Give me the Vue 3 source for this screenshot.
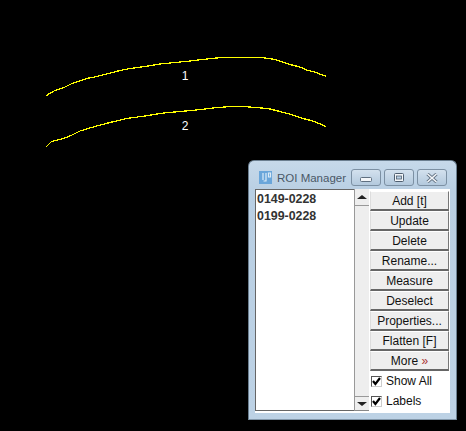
<script setup>
const curves = [
  '46,96 48,94.5 55,90.5 65,87 71,84 86.5,78.5 97,76.5 106.5,74 118,71 130,68.5 145,66.5 160,64 175,62.5 190,61 207,59 221.5,57.5 261.5,57.5 275,59.5 279,61 290,64.5 300,67 306.5,70 316,72.5 326.5,76.5',
  '46,147 51.5,141.5 63.5,138.5 72,135 80,131 96.5,126 110,122.5 126.5,118.5 145,116 163.5,113 180,111.5 196.5,110 213,108 230,106.5 243.5,106.5 268,108.5 280,111.5 293,115 303,118.5 313,121 326,126.5'
]
const labels = [
  { text: '1', x: 185, y: 80 },
  { text: '2', x: 185, y: 130 }
]
const rois = ['0149-0228', '0199-0228']
const buttons = ['Add [t]', 'Update', 'Delete', 'Rename...', 'Measure', 'Deselect', 'Properties...', 'Flatten [F]']
const checks = ['Show All', 'Labels']
</script>

<template>
  <div class="desktop">
    <svg class="canvas" width="466" height="431" viewBox="0 0 466 431">
      <polyline v-for="(c, i) in curves" :key="i" :points="c" class="curve" />
      <text v-for="l in labels" :key="l.text" :x="l.x" :y="l.y" class="label">{{ l.text }}</text>
    </svg>

    <div class="window">
      <div class="titlebar">
        <svg class="appicon" width="13" height="13" viewBox="0 0 13 13">
          <rect x="0" y="0" width="13" height="13" fill="#6aa6da" />
          <path d="M4 2v7M7 2v8H4.5M9.5 2h2v4h-2z" fill="none" stroke="#dcecf8" stroke-width="1.2" />
        </svg>
        <span class="title">ROI Manager</span>
        <div class="controls">
          <div class="ctl">
            <svg width="14" height="8" viewBox="0 0 14 8"><rect x="1.5" y="3.5" width="11" height="4" rx="1" fill="#f3f6f9" stroke="#5f6f80" /></svg>
          </div>
          <div class="ctl">
            <svg width="14" height="10" viewBox="0 0 14 10"><rect x="2.5" y="0.5" width="9" height="8" rx="1" fill="#f3f6f9" stroke="#4f5f70" /><rect x="4.5" y="3" width="5" height="3" fill="#b9cfe3" stroke="#4f5f70" stroke-width="0.8" /></svg>
          </div>
          <div class="ctl ctl-close">
            <svg width="14" height="10" viewBox="0 0 14 10"><path d="M2.5 1 L11.5 9 M11.5 1 L2.5 9" stroke="#5f6f80" stroke-width="3.2" /><path d="M2.5 1 L11.5 9 M11.5 1 L2.5 9" stroke="#f3f6f9" stroke-width="1.6" /></svg>
          </div>
        </div>
      </div>

      <div class="panel">
        <div class="list">
          <div v-for="r in rois" :key="r" class="roi">{{ r }}</div>
        </div>
        <div class="scrollbar">
          <div class="arrow top"><span class="tri up"></span></div>
          <div class="track"></div>
          <div class="arrow bottom"><span class="tri down"></span></div>
        </div>
        <div class="side">
          <div v-for="b in buttons" :key="b" class="btn">{{ b }}</div>
          <div class="btn">More <span class="more">»</span></div>
          <label v-for="c in checks" :key="c" class="check">
            <span class="box">
              <svg width="9" height="9" viewBox="0 0 9 9"><path d="M1 4 L3.4 7 L8 1" fill="none" stroke="#000" stroke-width="2.2" /></svg>
            </span>
            {{ c }}
          </label>
        </div>
      </div>
    </div>
  </div>
</template>

<style scoped>
.desktop {
  position: relative;
  width: 466px;
  height: 431px;
  background: #000;
  overflow: hidden;
  font-family: "Liberation Sans", Arial, sans-serif;
}
.canvas {
  position: absolute;
  left: 0;
  top: 0;
}
.curve {
  fill: none;
  stroke: #ffff00;
  stroke-width: 1.25;
  shape-rendering: crispEdges;
}
.label {
  fill: #fff;
  font-size: 12px;
  text-anchor: middle;
  font-family: "Liberation Sans", Arial, sans-serif;
}
.window {
  position: absolute;
  left: 248px;
  top: 160px;
  width: 209px;
  height: 260px;
  box-sizing: border-box;
  padding: 0 6px 6px 6px;
  display: flex;
  flex-direction: column;
  background: linear-gradient(180deg, #c6d9ea 0, #b9cfe3 30px, #bdd2e5 100%);
  border-radius: 6px 6px 0 0;
  border: 1px solid #6b7f90;
  border-bottom-color: #8296a8;
}
.titlebar {
  height: 28px;
  display: flex;
  align-items: center;
  flex: none;
  padding-top: 5px;
  box-sizing: border-box;
}
.appicon {
  margin: 0 5px 0 4px;
  flex: none;
}
.title {
  font-size: 11.5px;
  color: #4a5866;
  white-space: nowrap;
}
.controls {
  margin-left: auto;
  margin-right: 3px;
  display: flex;
  gap: 3px;
}
.ctl {
  width: 30px;
  height: 17px;
  box-sizing: border-box;
  border: 1px solid #7c90a3;
  border-radius: 3px;
  background: linear-gradient(180deg, #d3e1ee, #b3c9dd);
  display: flex;
  align-items: center;
  justify-content: center;
}
.ctl svg {
  display: block;
}
.panel {
  flex: 1;
  display: flex;
  align-items: flex-start;
  background: #fff;
  min-height: 0;
}
.list {
  width: 99px;
  height: 222px;
  box-sizing: border-box;
  border: 1px solid #666;
  border-right: none;
  padding: 1px 1px;
  flex: none;
}
.roi {
  font-size: 12.4px;
  font-weight: bold;
  color: #333;
  line-height: 17px;
  height: 17px;
}
.scrollbar {
  width: 15px;
  height: 222px;
  box-sizing: border-box;
  flex: none;
  margin-right: 1px;
  display: flex;
  flex-direction: column;
  background: #eeeeee;
  border-left: 1px solid #999;
  border-bottom: 1px solid #888;
}
.arrow {
  height: 17px;
  flex: none;
  display: flex;
  align-items: center;
  justify-content: center;
  background: #eee;
  box-sizing: border-box;
}
.arrow.top {
  border-bottom: 1px solid #999;
}
.arrow.bottom {
  border-top: 1px solid #999;
  height: 14px;
}
.track {
  flex: 1;
  background: #eee;
}
.tri {
  width: 0;
  height: 0;
  border-left: 5px solid transparent;
  border-right: 5px solid transparent;
}
.tri.up {
  border-bottom: 4px solid #222;
}
.tri.down {
  border-top: 4px solid #222;
}
.side {
  flex: 1;
  display: flex;
  flex-direction: column;
  padding-top: 2px;
  padding-right: 1px;
  min-width: 0;
}
.btn {
  height: 20px;
  box-sizing: border-box;
  flex: none;
  background: #eeeeee;
  border-top: 1px solid #fff;
  border-left: 1px solid #ddd;
  border-right: 1px solid #777;
  border-bottom: 2px solid #666;
  font-size: 12px;
  color: #111;
  text-align: center;
  line-height: 18px;
}
.more {
  color: #a33;
}
.check {
  height: 20px;
  display: flex;
  align-items: center;
  gap: 4px;
  font-size: 12px;
  color: #111;
  padding-left: 1px;
}
.box {
  width: 11px;
  height: 11px;
  box-sizing: border-box;
  border: 1px solid #ccc;
  border-top-color: #555;
  border-left-color: #555;
  background: #fff;
  display: block;
  flex: none;
}
.box svg {
  display: block;
}
</style>
